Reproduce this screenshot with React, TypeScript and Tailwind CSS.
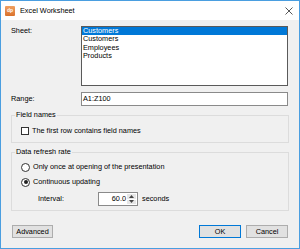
import React from "react";

function Radio({ checked }: { checked?: boolean }) {
  return (
    <div className="w-[9px] h-[9px] rounded-full border border-[#333333] bg-white flex items-center justify-center shrink-0">
      {checked && <div className="w-[4px] h-[4px] rounded-full bg-[#222222]" />}
    </div>
  );
}

export default function App() {
  return (
    <div className="w-[300px] h-[249px] border border-[#4a9ee0] flex flex-col font-['Liberation_Sans',Arial,sans-serif] text-[7.3px] leading-[10px] text-black overflow-hidden">
      {/* Title bar */}
      <div className="h-[19px] bg-white flex items-center pl-[4px] pr-[6px] shrink-0">
        <div className="w-[10px] h-[10px] rounded-[1px] bg-gradient-to-b from-[#f0a060] to-[#d9712b] flex items-center justify-center">
          <span className="text-white text-[5px] leading-[5px] font-bold">dp</span>
        </div>
        <span className="ml-[5px]">Excel Worksheet</span>
        <div className="flex-1" />
        <svg width="8" height="8" viewBox="0 0 8 8">
          <path d="M0.5 0.5 L7.5 7.5 M7.5 0.5 L0.5 7.5" stroke="#444" strokeWidth="0.9" />
        </svg>
      </div>

      {/* Body */}
      <div className="flex-1 bg-[#f0f0f0] pl-[10px] pr-[10px] pt-[6px] pb-[10px] flex flex-col">
        {/* Sheet */}
        <div className="flex">
          <div className="w-[70px]">Sheet:</div>
          <div className="w-[207px] h-[60px] border border-[#5a5a5a] bg-white flex flex-col">
            <div className="h-[8.33px] leading-[8.33px] bg-[#0078d7] text-white pl-[1px]">Customers</div>
            <div className="h-[8.33px] leading-[8.33px] pl-[1px]">Customers</div>
            <div className="h-[8.33px] leading-[8.33px] pl-[1px]">Employees</div>
            <div className="h-[8.33px] leading-[8.33px] pl-[1px]">Products</div>
          </div>
        </div>

        {/* Range */}
        <div className="flex items-center mt-[6px]">
          <div className="w-[70px]">Range:</div>
          <div className="w-[207px] h-[14px] border border-[#8a8a8a] bg-white flex items-center pl-[1px]">A1:Z100</div>
        </div>

        {/* Field names */}
        <fieldset className="mt-[4px] border border-[#dcdcdc]">
          <legend className="ml-[3px] px-[1px] leading-[10px]">Field names</legend>
          <div className="pl-[9px] pt-[6px] pb-[6px] flex items-center">
            <div className="w-[8px] h-[8px] border border-[#333333] bg-white shrink-0" />
            <span className="ml-[3px] leading-[10px]">The first row contains field names</span>
          </div>
        </fieldset>

        {/* Data refresh rate */}
        <fieldset className="mt-[4px] border border-[#dcdcdc]">
          <legend className="ml-[3px] px-[1px] leading-[10px]">Data refresh rate</legend>
          <div className="pl-[9px] pt-[5px] pb-[4px] flex flex-col gap-[5px]">
            <div className="flex items-center h-[10px]">
              <Radio />
              <span className="ml-[3px]">Only once at opening of the presentation</span>
            </div>
            <div className="flex items-center h-[10px]">
              <Radio checked />
              <span className="ml-[3px]">Continuous updating</span>
            </div>
            <div className="flex items-center h-[14px]">
              <div className="ml-[17px] w-[60px]">Interval:</div>
              <div className="w-[40px] h-[14px] border border-[#8a8a8a] bg-white flex">
                <div className="flex-1 text-right pr-[1px] leading-[12px]">60.0</div>
                <div className="w-[9px] mr-[1px] flex flex-col gap-[1px] py-[1px]">
                  <div className="flex-1 bg-[#e6e6e6] flex items-center justify-center">
                    <svg width="5" height="3" viewBox="0 0 5 3"><path d="M0 3 L2.5 0 L5 3 Z" fill="#444" /></svg>
                  </div>
                  <div className="flex-1 bg-[#e6e6e6] flex items-center justify-center">
                    <svg width="5" height="3" viewBox="0 0 5 3"><path d="M0 0 L5 0 L2.5 3 Z" fill="#444" /></svg>
                  </div>
                </div>
              </div>
              <span className="ml-[4px]">seconds</span>
            </div>
          </div>
        </fieldset>

        <div className="flex-1" />

        {/* Buttons */}
        <div className="flex items-center justify-between px-[1px]">
          <button className="w-[41px] h-[13px] bg-[#e1e1e1] border border-[#adadad] flex items-center justify-center leading-[10px]">Advanced</button>
          <div className="flex gap-[5px]">
            <button className="w-[42px] h-[13px] bg-[#e1e1e1] border border-[#0078d7] flex items-center justify-center leading-[10px]">OK</button>
            <button className="w-[42px] h-[13px] bg-[#e1e1e1] border border-[#adadad] flex items-center justify-center leading-[10px]">Cancel</button>
          </div>
        </div>
      </div>
    </div>
  );
}
